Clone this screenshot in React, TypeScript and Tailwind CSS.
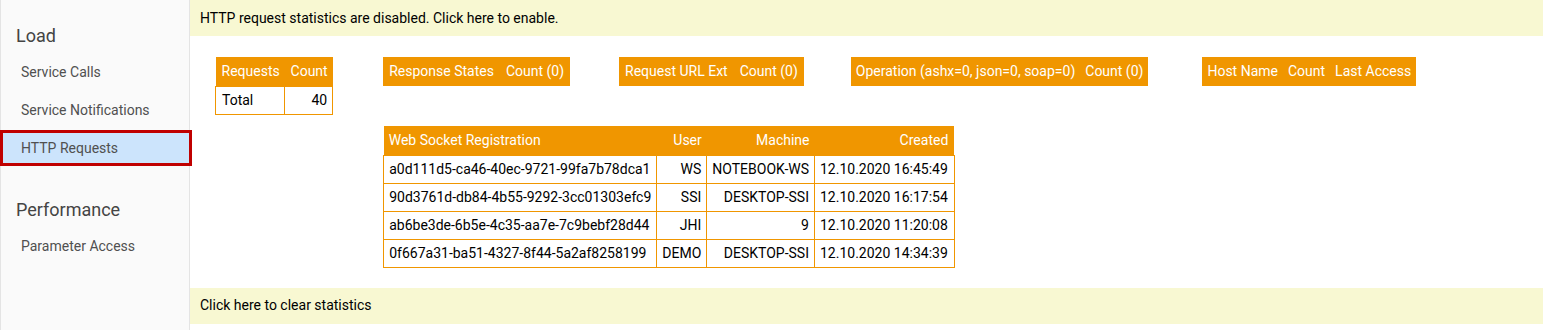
import React from "react";

const th = "bg-[#f09600] text-white font-normal h-[29px] px-[5px] whitespace-nowrap";
const td = "border border-[#f09600] h-[28px] px-[5px] whitespace-nowrap";

function HeaderOnly({ cols, tight }: { cols: string[]; tight?: boolean }) {
  return (
    <table className="border-collapse">
      <thead>
        <tr>
          {cols.map((c, i) => (
            <th
              key={i}
              className={
                (tight ? "px-[5px] " : "px-[6px] ") +
                "bg-[#f09600] text-white font-normal h-[29px] whitespace-nowrap text-left"
              }
            >
              {c}
            </th>
          ))}
        </tr>
      </thead>
    </table>
  );
}

const ws = [
  ["a0d111d5-ca46-40ec-9721-99fa7b78dca1", "WS", "NOTEBOOK-WS", "12.10.2020 16:45:49"],
  ["90d3761d-db84-4b55-9292-3cc01303efc9", "SSI", "DESKTOP-SSI", "12.10.2020 16:17:54"],
  ["ab6be3de-6b5e-4c35-aa7e-7c9bebf28d44", "JHI", "9", "12.10.2020 11:20:08"],
  ["0f667a31-ba51-4327-8f44-5a2af8258199", "DEMO", "DESKTOP-SSI", "12.10.2020 14:34:39"],
];

export default function App() {
  return (
    <div
      className="flex w-[1543px] h-[330px] bg-white text-[14px] text-black"
      style={{ fontFamily: "Roboto, 'Liberation Sans', sans-serif" }}
    >
      <aside className="w-[190px] shrink-0 bg-[#fafafa] border-l border-r border-[#e4e4e4] text-[#505050] relative z-10">
        <div className="h-[54px] flex items-center pl-[15px] pt-[16px] text-[18px] text-[#444]">Load</div>
        <div className="flex flex-col gap-[2px]">
          <div className="h-[36px] flex items-center pl-[20px]">Service Calls</div>
          <div className="h-[36px] flex items-center pl-[20px]">Service Notifications</div>
          <div className="h-[36px] w-[192px] -ml-px flex items-center pl-[18px] bg-[#cce4fc] border-[3px] border-[#c00000]">
            HTTP Requests
          </div>
        </div>
        <div className="h-[62px] flex items-center pl-[15px] pt-[24px] text-[18px] text-[#444]">Performance</div>
        <div className="h-[36px] flex items-center pl-[20px]">Parameter Access</div>
      </aside>
      <main className="flex-1 flex flex-col">
        <div className="h-[36px] bg-[#f8f8d2] flex items-center pl-[10px] cursor-pointer">
          HTTP request statistics are disabled. Click here to enable.
        </div>
        <div className="flex pl-[25px] pt-[21px] gap-[50px] items-start">
          <table className="border-collapse">
            <thead>
              <tr>
                <th className={th + " text-left pl-[6px]"}>Requests</th>
                <th className={th + " text-right"}>Count</th>
              </tr>
            </thead>
            <tbody>
              <tr>
                <td className={td + " text-left pl-[6px]"}>Total</td>
                <td className={td + " text-right w-[48px]"}>40</td>
              </tr>
            </tbody>
          </table>
          <div className="flex flex-col">
            <div className="flex items-start">
              <HeaderOnly cols={["Response States", "Count (0)"]} />
              <div className="ml-[49px]">
                <HeaderOnly cols={["Request URL Ext", "Count (0)"]} />
              </div>
              <div className="ml-[47px]">
                <HeaderOnly tight cols={["Operation (ashx=0, json=0, soap=0)", "Count (0)"]} />
              </div>
              <div className="ml-[54px]">
                <HeaderOnly tight cols={["Host Name", "Count", "Last Access"]} />
              </div>
            </div>
            <table className="border-collapse mt-[40px] self-start">
              <thead>
                <tr>
                  <th className={th + " text-left"}>Web Socket Registration</th>
                  <th className={th + " text-right"}>User</th>
                  <th className={th + " text-right"}>Machine</th>
                  <th className={th + " text-right pr-[6px]"}>Created</th>
                </tr>
              </thead>
              <tbody>
                {ws.map((r, i) => (
                  <tr key={i}>
                    <td className={td + " text-left"}>{r[0]}</td>
                    <td className={td + " text-right"}>{r[1]}</td>
                    <td className={td + " text-right"}>{r[2]}</td>
                    <td className={td + " text-right pr-[6px]"}>{r[3]}</td>
                  </tr>
                ))}
              </tbody>
            </table>
          </div>
        </div>
        <div className="mt-[20px] h-[36px] bg-[#f8f8d2] flex items-center pl-[10px] cursor-pointer">
          Click here to clear statistics
        </div>
      </main>
    </div>
  );
}
